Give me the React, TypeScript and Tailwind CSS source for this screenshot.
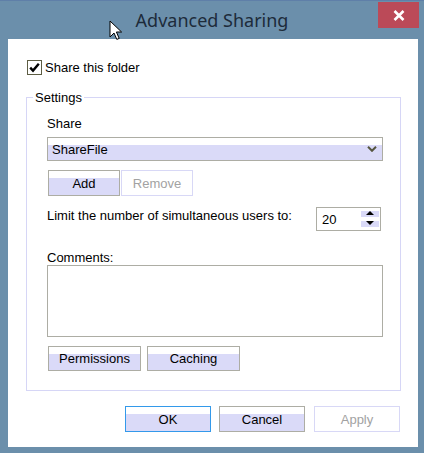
import React from "react";

type Kind = "normal" | "disabled" | "default";

function Btn({ label, w, h, kind }: { label: string; w: string; h: string; kind: Kind }) {
  const base = "flex items-center justify-center border shrink-0";
  const styles: Record<Kind, string> = {
    normal:
      "border-[#adada4] bg-[linear-gradient(to_bottom,#ffffff_7px,#dadaf8_7px)] text-black",
    default:
      "border-[#3399ea] bg-[linear-gradient(to_bottom,#ffffff_7px,#dadaf8_7px)] text-black",
    disabled: "border-[#d8d8f6] bg-white text-[#a2a2a2]",
  };
  return <div className={`${base} ${w} ${h} ${styles[kind]}`}>{label}</div>;
}

function SpinBtn({ up }: { up: boolean }) {
  return (
    <div className="w-[18px] h-[8px] bg-[linear-gradient(to_bottom,#ffffff_2px,#dadaf8_2px)] flex items-center justify-center">
      <svg width="8" height="4" viewBox="0 0 8 4">
        {up ? <polygon points="0,4 8,4 4,0" fill="#000" /> : <polygon points="0,0 8,0 4,4" fill="#000" />}
      </svg>
    </div>
  );
}

export default function App() {
  return (
    <div className="w-[424px] h-[453px] bg-[#6b8fab] shadow-[inset_0_1px_0_#5f7fa8] flex flex-col relative overflow-hidden">
      {/* Title bar */}
      <div className="grid grid-cols-[1fr_auto_1fr] h-[39px] shrink-0">
        <div />
        <div className="mt-[8px] text-[18px] leading-[24px] text-[#1d2b3a] font-['Noto_Sans',sans-serif]">
          Advanced Sharing
        </div>
        <div className="justify-self-end mt-[2px] mr-[5px] w-[41px] h-[26px] bg-[#bb4a58] flex items-center justify-center">
          <svg width="12" height="11" viewBox="0 0 12 11">
            <path d="M1.5 1 L10.5 10 M10.5 1 L1.5 10" stroke="#ffffff" strokeWidth="2.6" />
          </svg>
        </div>
      </div>

      {/* Client area */}
      <div className="ml-[8px] mr-[6px] mb-[6px] h-[408px] bg-white flex flex-col text-[13px] leading-[15px] text-black font-['Liberation_Sans',Arial,sans-serif]">
        {/* Checkbox */}
        <div className="mt-[21px] ml-[19px] flex items-center h-[15px]">
          <div className="w-[15px] h-[15px] border border-[#5d5d43] bg-white flex items-center justify-center">
            <svg width="13" height="13" viewBox="0 0 13 13">
              <path d="M2.2 6.6 L5 9.6 L10.8 2.8" stroke="#000" strokeWidth="2.4" fill="none" />
            </svg>
          </div>
          <span className="ml-[3px]">Share this folder</span>
        </div>

        {/* Settings group */}
        <div className="mt-[22px] ml-[18px] w-[375px] border border-[#d6d6f6] flex flex-col pl-[20px] pr-[17px] pb-[19px]">
          <div className="-mt-[8px] ml-[-14px] px-[2px] bg-white w-fit">Settings</div>

          <div className="mt-[11px]">Share</div>

          <div className="mt-[6px] h-[24px] border border-[#adada4] bg-[linear-gradient(to_bottom,#ffffff_7px,#dadaf8_7px)] flex items-center justify-between pl-[4px] pr-[5px]">
            <span>ShareFile</span>
            <svg width="10" height="6" viewBox="0 0 10 6">
              <path d="M1 0.8 L5 4.8 L9 0.8" stroke="#55553f" strokeWidth="2" fill="none" />
            </svg>
          </div>

          <div className="mt-[9px] ml-[1px] flex gap-[1px] h-[26px]">
            <Btn label="Add" w="w-[72px]" h="h-[26px]" kind="normal" />
            <Btn label="Remove" w="w-[72px]" h="h-[26px]" kind="disabled" />
          </div>

          <div className="mt-[11px] flex items-start justify-between">
            <span className="mt-[1px]">Limit the number of simultaneous users to:</span>
            <div className="w-[65px] h-[24px] mr-[2px] border border-[#adada4] flex items-center justify-between pl-[5px] pr-[1px]">
              <span>20</span>
              <div className="self-start mt-[1px] flex flex-col gap-[2px]">
                <SpinBtn up />
                <SpinBtn up={false} />
              </div>
            </div>
          </div>

          <div className="mt-[19px]">Comments:</div>
          <div className="h-[72px] border border-[#adada4] bg-white" />

          <div className="mt-[9px] ml-[1px] flex gap-[6px]">
            <Btn label="Permissions" w="w-[93px]" h="h-[25px]" kind="normal" />
            <Btn label="Caching" w="w-[93px]" h="h-[25px]" kind="normal" />
          </div>
        </div>

        {/* Footer buttons */}
        <div className="mt-[15px] mr-[18px] flex justify-end">
          <Btn label="OK" w="w-[86px]" h="h-[26px]" kind="default" />
          <div className="ml-[8px]">
            <Btn label="Cancel" w="w-[86px]" h="h-[26px]" kind="normal" />
          </div>
          <div className="ml-[9px]">
            <Btn label="Apply" w="w-[86px]" h="h-[26px]" kind="disabled" />
          </div>
        </div>
      </div>

      {/* Mouse cursor */}
      <svg
        className="absolute left-[109px] top-[20px]"
        width="14"
        height="21"
        viewBox="0 0 14 21"
      >
        <polygon
          points="1,1 1,17 5,13 7.8,19.4 10.2,18.4 7.4,12 12.6,12"
          fill="#ffffff"
          stroke="#000000"
          strokeWidth="1"
          strokeLinejoin="miter"
        />
      </svg>
    </div>
  );
}
